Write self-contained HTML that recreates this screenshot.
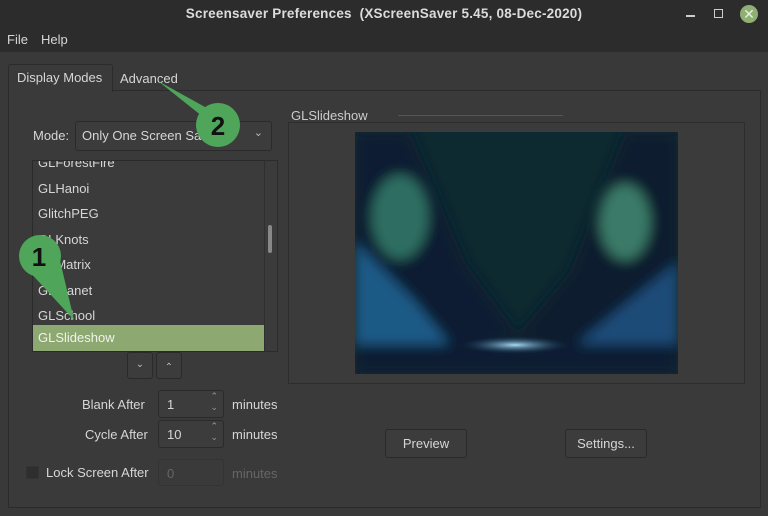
<!DOCTYPE html>
<html><head><style>
*{margin:0;padding:0;box-sizing:border-box}
body{width:768px;height:516px;background:#393939;font-family:"Liberation Sans","DejaVu Sans",sans-serif;color:#d6d6d6;font-size:13px;position:relative;overflow:hidden}
.a{position:absolute}
.bx{position:absolute;border:1px solid #2a2a2a;background:#3c3c3c;border-radius:3px}
</style></head><body>
<div class="a" style="left:0;top:0;width:768px;height:52px;background:#2c2c2c"></div>
<div class="a" style="left:0;top:6px;width:768px;text-align:center;font-size:13.5px;color:#dcdcdc;font-weight:bold;letter-spacing:0.2px">Screensaver Preferences&nbsp; (XScreenSaver 5.45, 08-Dec-2020)</div>
<div class="a" style="left:686px;top:15px;width:9px;height:2px;background:#ccc"></div>
<div class="a" style="left:714px;top:9px;width:9px;height:9px;border:1.5px solid #ccc"></div>
<div class="a" style="left:740px;top:5px;width:18px;height:18px;border-radius:50%;background:#8fb072;color:#e8f0e0;font-size:14px;text-align:center;line-height:18px">✕</div>
<div class="a" style="left:7px;top:32px;font-size:13px">File</div>
<div class="a" style="left:41px;top:32px;font-size:13px">Help</div>
<div class="a" style="left:8px;top:90px;width:753px;height:418px;border:1px solid #2b2b2b;background:#3a3a3a"></div>
<div class="a" style="left:8px;top:64px;width:105px;height:28px;border:1px solid #2b2b2b;border-bottom:none;background:#3a3a3a;border-radius:3px 3px 0 0;padding:5px 0 0 8px">Display Modes</div>
<div class="a" style="left:120px;top:71px">Advanced</div>
<div class="a" style="left:33px;top:128px">Mode:</div>
<div class="bx" style="left:75px;top:121px;width:197px;height:30px;padding:6px 0 0 6px">Only One Screen Saver<span style="position:absolute;right:8px;top:4px;font-size:11px;color:#bbb">⌄</span></div>
<div class="a" style="left:32px;top:160px;width:246px;height:192px;border:1px solid #2b2b2b;background:#3b3b3b;overflow:hidden">
<div style="position:absolute;left:5px;top:-11px;line-height:25.5px">GLForestFire<br>GLHanoi<br>GlitchPEG<br>GLKnots<br>GLMatrix<br>GLPlanet<br>GLSchool</div>
<div style="position:absolute;left:0;top:164px;width:232px;height:26px;background:#8ea872;color:#eef3e8;padding:5px 0 0 5px">GLSlideshow</div>
<div style="position:absolute;left:231px;top:0;width:1px;height:192px;background:#2f2f2f"></div>
<div style="position:absolute;left:235px;top:64px;width:4px;height:28px;background:#888;border-radius:2px"></div>
</div>
<div class="bx" style="left:127px;top:352px;width:26px;height:27px;text-align:center;font-size:10px;line-height:24px;color:#bbb">⌄</div>
<div class="bx" style="left:156px;top:352px;width:26px;height:27px;text-align:center;font-size:10px;line-height:30px;color:#bbb">⌃</div>
<div class="a" style="left:82px;top:397px">Blank After</div>
<div class="bx" style="left:158px;top:390px;width:66px;height:28px;padding:6px 0 0 8px">1<span style="position:absolute;right:5px;top:0;font-size:9px;line-height:11px;color:#999">⌃<br>⌄</span></div>
<div class="a" style="left:232px;top:397px">minutes</div>
<div class="a" style="left:85px;top:427px">Cycle After</div>
<div class="bx" style="left:158px;top:420px;width:66px;height:28px;padding:6px 0 0 8px">10<span style="position:absolute;right:5px;top:0;font-size:9px;line-height:11px;color:#999">⌃<br>⌄</span></div>
<div class="a" style="left:232px;top:427px">minutes</div>
<div class="a" style="left:26px;top:466px;width:13px;height:13px;background:#2e2e2e;border:1px solid #333"></div>
<div class="a" style="left:46px;top:465px">Lock Screen After</div>
<div class="a" style="left:158px;top:459px;width:66px;height:27px;border:1px solid #333;border-radius:3px;padding:6px 0 0 8px;color:#666">0</div>
<div class="a" style="left:232px;top:466px;color:#666">minutes</div>
<div class="a" style="left:291px;top:108px;color:#ccc">GLSlideshow</div>
<div class="a" style="left:398px;top:115px;width:165px;height:1px;background:#555"></div>
<div class="a" style="left:288px;top:122px;width:457px;height:262px;border:1px solid #2d2d2d;background:#3b3b3b"></div>
<svg class="a" style="left:355px;top:132px" width="323" height="242" viewBox="0 0 323 242">
<defs>
<radialGradient id="g3" cx="0.5" cy="0.5" r="0.5"><stop offset="0" stop-color="#a8dcf5"/><stop offset="1" stop-color="#10365a" stop-opacity="0"/></radialGradient>
<filter id="b"><feGaussianBlur stdDeviation="6"/></filter>
</defs>
<rect width="323" height="242" fill="#0d2a30"/>
<g filter="url(#b)">
<path d="M0 0 L55 0 L110 130 L165 205 L0 242Z" fill="#0a1a30"/>
<path d="M323 0 L270 0 L215 140 L160 205 L323 242Z" fill="#0a1a2e"/>
<path d="M0 110 L60 170 L105 225 L0 242Z" fill="#1a5a86"/>
<path d="M323 130 L255 185 L210 222 L323 242Z" fill="#1c4c78"/>
<ellipse cx="45" cy="85" rx="28" ry="42" fill="#2e6e62"/>
<ellipse cx="270" cy="90" rx="25" ry="38" fill="#3a7a68"/>
<rect y="212" width="323" height="30" fill="#091a33"/>
</g>
<ellipse cx="160" cy="213" rx="55" ry="9" fill="url(#g3)"/>
</svg>
<div class="bx" style="left:385px;top:429px;width:82px;height:29px;text-align:center;line-height:27px">Preview</div>
<div class="bx" style="left:565px;top:429px;width:82px;height:29px;text-align:center;line-height:27px">Settings...</div>
<svg class="a" style="left:0;top:0" width="768" height="516">
<path d="M158 81 L205 107 L232 140Z" fill="#4fa65a"/>
<circle cx="218" cy="125" r="22" fill="#4fa65a"/>
<text x="218" y="135" font-family="Liberation Sans" font-weight="bold" font-size="26" text-anchor="middle" fill="#111">2</text>
<path d="M28 270 L74 320 L58 252Z" fill="#4fa65a"/>
<circle cx="40" cy="256" r="21" fill="#4fa65a"/>
<text x="39" y="266" font-family="Liberation Sans" font-weight="bold" font-size="26" text-anchor="middle" fill="#111">1</text>
</svg>
</body></html>
